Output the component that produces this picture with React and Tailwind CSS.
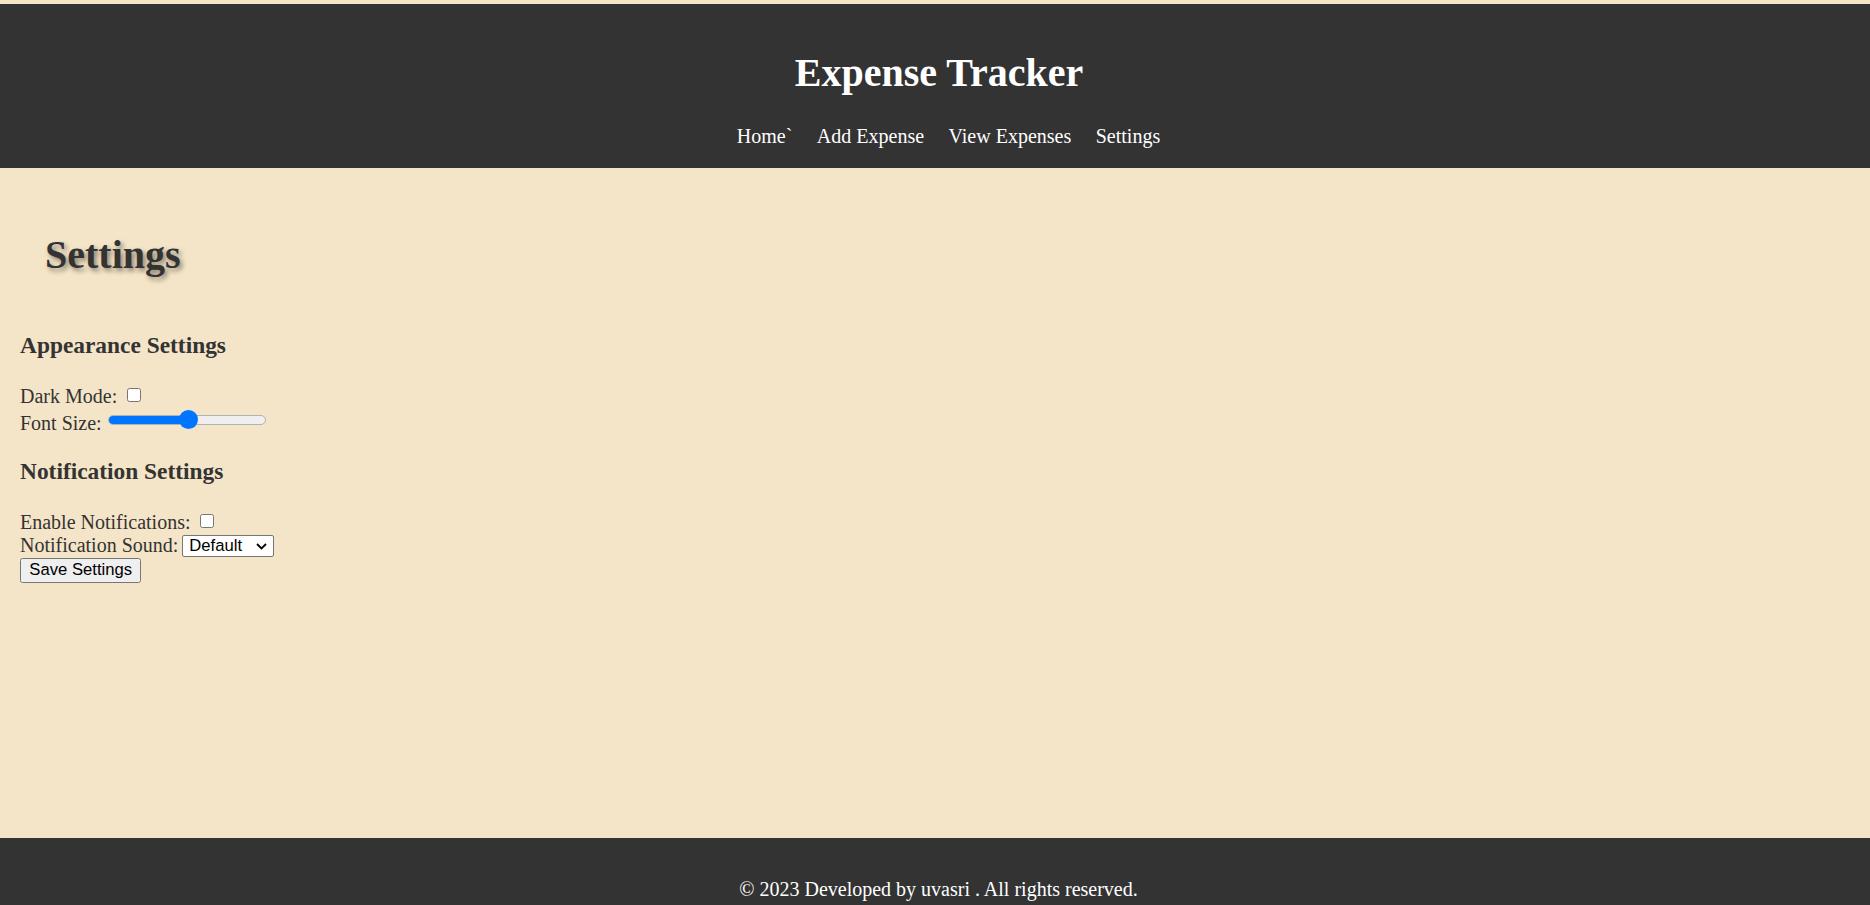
import React from "react";

const navLinks = ["Home`", "Add Expense", "View Expenses", "Settings"];

function Checkbox() {
  return (
    <span className="mt-[3px] ml-[9.5px] inline-block h-[14px] w-[14px] rounded-[2.5px] border border-[#767676] bg-white" />
  );
}

function FontSlider() {
  // track with the filled part up to the thumb
  return (
    <div className="relative mt-[3px] ml-[6px] h-[10px] w-[158px]">
      <div className="flex h-full w-full overflow-hidden rounded-full border border-[#b2b2b2] bg-[#efefef]">
        <div className="h-full w-[80px] bg-[#0075ff]" />
      </div>
      <div className="absolute left-[71px] top-[-4.5px] h-[19px] w-[19px] rounded-full bg-[#0075ff]" />
    </div>
  );
}

function SoundSelect() {
  return (
    <div className="mt-[1.3px] ml-[4px] flex h-[22.4px] w-[91.4px] items-center justify-between rounded-[2px] border border-[#767676] bg-white pl-[6px] pr-[6px] font-['Liberation_Sans',Arial,sans-serif] text-[16.67px] leading-[20px] text-black">
      <span>Default</span>
      <svg width="11" height="7" viewBox="0 0 11 7" className="mt-[1px]">
        <path d="M1 1 L5.5 5.5 L10 1" fill="none" stroke="#000" strokeWidth="1.8" />
      </svg>
    </div>
  );
}

export default function App() {
  return (
    <div className="min-h-screen bg-[#f5e5c8] pt-[4px] font-['Liberation_Serif','Times_New_Roman',serif] text-[20px] leading-[23px] text-[#333]">
      <header className="bg-[#333] pt-[46px] pb-[20px] text-center text-white">
        <h1 className="pl-[8px] text-[40px] font-bold leading-[46px]">Expense Tracker</h1>
        <nav className="mt-[29px] flex justify-center gap-[24.5px] pl-[27px] leading-[23px]">
          {navLinks.map((l) => (
            <a key={l} href="#" className="text-white no-underline">
              {l}
            </a>
          ))}
        </nav>
      </header>

      <main className="h-[670px] px-[20px] pt-[64px]">
        <h2 className="pl-[25px] text-[40px] font-bold leading-[46px] text-[#333] [text-shadow:2.5px_2.5px_5px_rgba(0,0,0,0.45)]">
          Settings
        </h2>

        <h3 className="mt-[53.5px] text-[23.4px] font-bold leading-[27px]">Appearance Settings</h3>
        <div className="mt-[26px] flex h-[23px] items-start">
          <span>Dark Mode:</span>
          <Checkbox />
        </div>
        <div className="mt-[4px] flex h-[23px] items-start">
          <span>Font Size:</span>
          <FontSlider />
        </div>

        <h3 className="mt-[23px] text-[23.4px] font-bold leading-[27px]">Notification Settings</h3>
        <div className="mt-[26px] flex h-[23px] items-start">
          <span>Enable Notifications:</span>
          <Checkbox />
        </div>
        <div className="flex h-[24px] items-start">
          <span>Notification Sound:</span>
          <SoundSelect />
        </div>
        <button className="flex h-[25.4px] w-[121.4px] items-center justify-center rounded-[2.5px] border border-[#767676] bg-[#efefef] font-['Liberation_Sans',Arial,sans-serif] text-[16.67px] leading-[20px] text-black">
          Save Settings
        </button>
      </main>

      <footer className="bg-[#333] pt-[39.5px] pb-[40px] pl-[7px] text-center text-white">
        <p>© 2023 Developed by uvasri . All rights reserved.</p>
      </footer>
    </div>
  );
}
